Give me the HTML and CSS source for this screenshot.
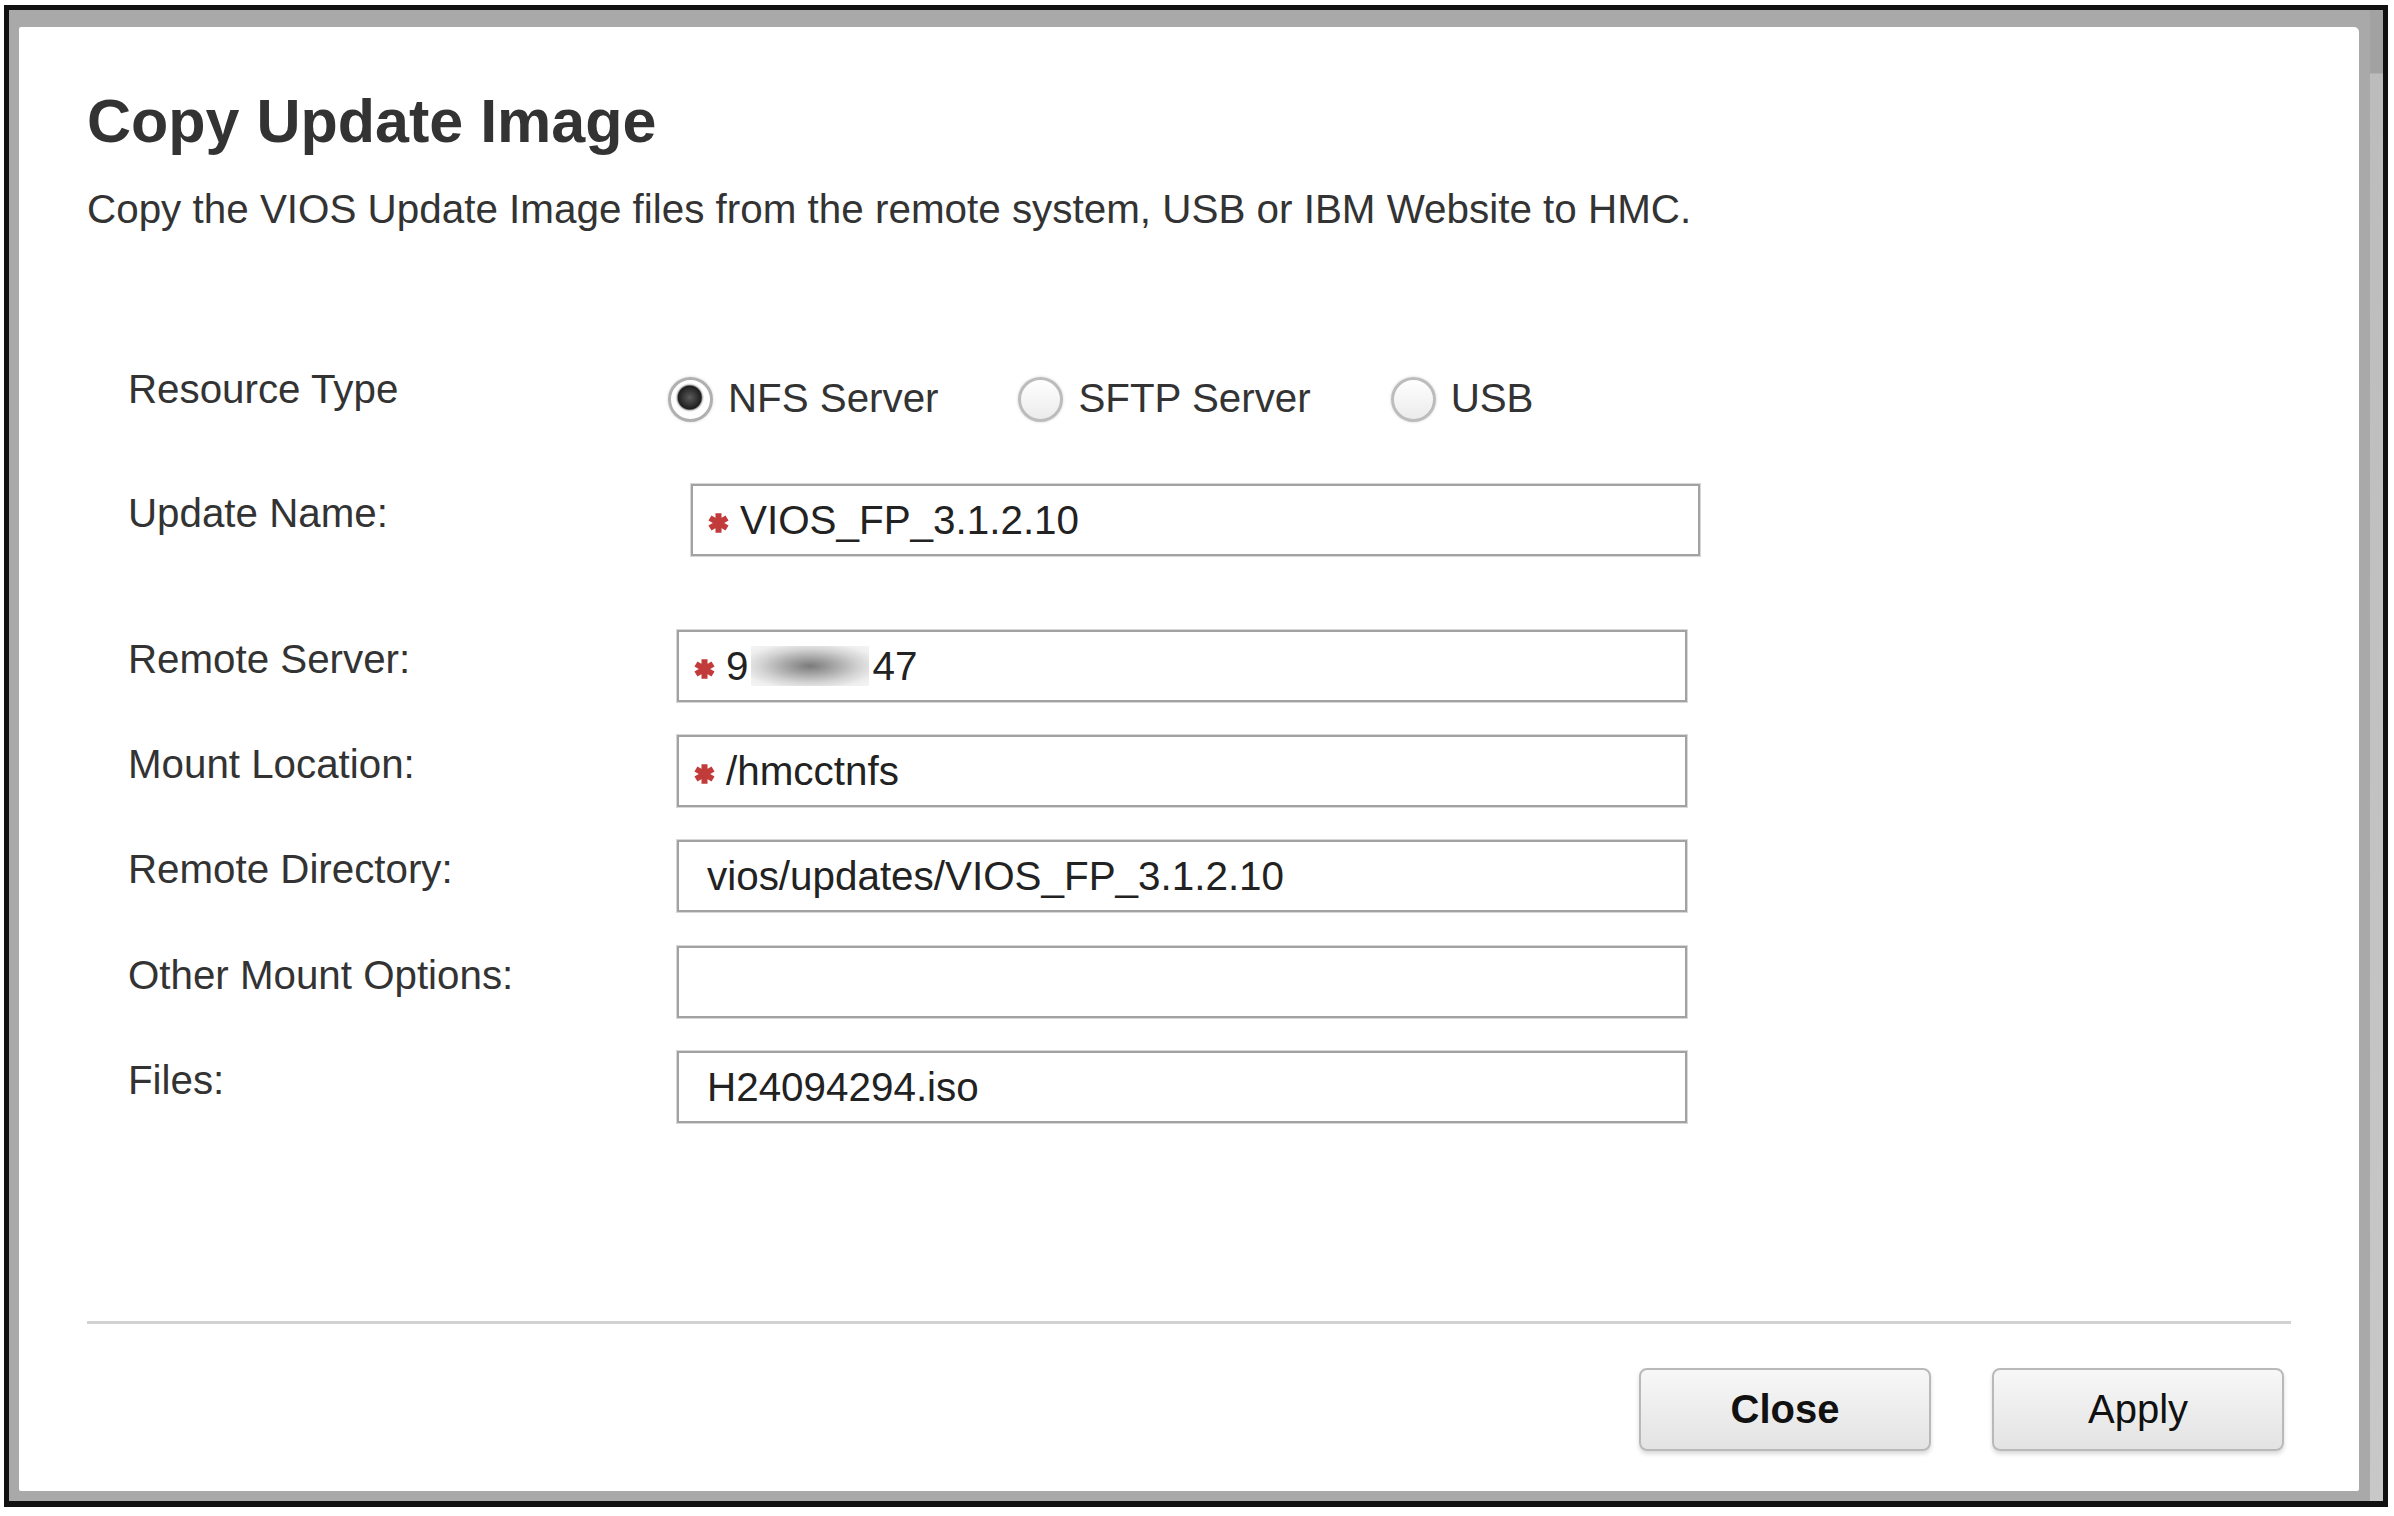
FILE: index.html
```html
<!DOCTYPE html>
<html lang="en">
<head>
    <meta charset="utf-8">
    <title>Copy Update Image</title>
    <link rel="stylesheet" href="styles.css">
</head>
<body>
<div class="frame">
	<div class="dialog">
		<h1 class="dlg-title">Copy Update Image</h1>
		<p class="dlg-desc">Copy the VIOS Update Image files from the remote system, USB or IBM Website to HMC.</p>
		<form class="dlg-form" action="" method="post">
			<div class="row row-type">
				<div class="lbl">Resource Type</div>
				<div class="radios">
					<label class="radio"><span class="dot on"></span>NFS Server</label>
					<label class="radio"><span class="dot"></span>SFTP Server</label>
					<label class="radio"><span class="dot"></span>USB</label>
				</div>
			</div>
			<div class="row row-name">
				<div class="lbl">Update Name:</div>
				<div class="field field-req field-name">
					<svg class="req" viewBox="0 0 16 16"><path d="M8 0.5V15.5M1.5 4.2L14.5 11.8M1.5 11.8L14.5 4.2"/></svg>
					<span>VIOS_FP_3.1.2.10</span>
				</div>
			</div>
			<div class="row row-server">
				<div class="lbl">Remote Server:</div>
				<div class="field field-req">
					<svg class="req" viewBox="0 0 16 16"><path d="M8 0.5V15.5M1.5 4.2L14.5 11.8M1.5 11.8L14.5 4.2"/></svg>
					<span>9</span><span class="blur"></span><span>47</span>
				</div>
			</div>
			<div class="row">
				<div class="lbl">Mount Location:</div>
				<div class="field field-req">
					<svg class="req" viewBox="0 0 16 16"><path d="M8 0.5V15.5M1.5 4.2L14.5 11.8M1.5 11.8L14.5 4.2"/></svg>
					<span>/hmcctnfs</span>
				</div>
			</div>
			<div class="row">
				<div class="lbl">Remote Directory:</div>
				<div class="field"><span>vios/updates/VIOS_FP_3.1.2.10</span></div>
			</div>
			<div class="row row-opts">
				<div class="lbl">Other Mount Options:</div>
				<div class="field"></div>
			</div>
			<div class="row">
				<div class="lbl">Files:</div>
				<div class="field"><span>H24094294.iso</span></div>
			</div>
		</form>
		<div class="sep"></div>
		<div class="foot">
			<button type="button" class="btn btn-close">Close</button>
			<button type="button" class="btn">Apply</button>
		</div>
	</div>
	<div class="sbar"></div>
</div>
</body>
</html>
```

FILE: styles.css
```css
html,body{margin:0;padding:0;background:#fff;}
body{font-family:"Liberation Sans",Arial,Helvetica,sans-serif;color:#333;}
.frame{margin:5px 0 0 4px;width:2384px;height:1502px;box-sizing:border-box;border:5px solid #111;border-bottom-width:6px;background:#a9a9a9;padding:17px 0 10px 10px;display:flex;}
.dialog{flex:1;background:#fff;border-radius:2px 5px 2px 2px;padding:0 68px;display:flex;flex-direction:column;}
.sbar{width:24px;margin:-17px 0 -10px 0;background:linear-gradient(to right,#a9a9a9 0,#a9a9a9 11px,transparent 11px),linear-gradient(to bottom,#a2a2a2 0,#a2a2a2 63px,#bcbcbc 64px,#c8c8c8 100%);}

.dlg-title{margin:0;padding-top:59px;font-size:61px;line-height:70px;font-weight:bold;color:#333;}
.dlg-desc{margin:30px 0 0;font-size:40.4px;line-height:46px;color:#333;}

.dlg-form{margin:135px 0 0;padding-left:41px;}
.row{display:flex;align-items:flex-start;margin-top:33px;}
.row .lbl{width:549px;flex:none;font-size:40.3px;line-height:46px;padding-top:7px;color:#333;}
.row-type{margin-top:0;}
.row-type .lbl{padding-top:0;}
.row-name{margin-top:62px;}
.row-server{margin-top:74px;}
.row-opts{margin-top:34px;}

.radios{display:flex;align-items:center;padding-top:9px;margin-left:-9px;}
.radio{display:flex;align-items:center;font-size:40.3px;line-height:46px;color:#333;margin-right:80px;cursor:pointer;}
.radio .dot{width:45px;height:45px;box-sizing:border-box;border-radius:50%;border:3px solid #bcbcbc;background:linear-gradient(#fff,#ebebeb);box-shadow:0 0 3px rgba(0,0,0,.18);margin-right:15px;}
.radio .dot.on{border-color:#b0b0b0;background:radial-gradient(circle at 48% 45%,#5c5c5c 0,#1e1e1e 11.5px,#cfcfcf 13px,#fff 14.5px,#fff 100%);}

.field{width:1010px;height:72px;box-sizing:border-box;border:2px solid #a2a2a2;box-shadow:0 0 0 1px #d8d8d8;background:#fff;display:flex;align-items:center;padding-left:28px;font-size:40.4px;color:#222;white-space:nowrap;}
.field-req{padding-left:15px;}
.field-name{margin-left:14px;width:1009px;}
.req{width:21px;height:22px;flex:none;margin:5px 11px 0 0;}
.req path{stroke:#c23b3b;stroke-width:4.6;fill:none;}
.blur{display:inline-block;width:118px;height:40px;margin:0 3px;background:radial-gradient(ellipse at center,#7a7a7a 0,#a4a4a4 28%,#d2d2d2 58%,#eeeeee 82%,#f5f5f5 100%);}

.sep{margin-top:198px;height:3px;background:#d2d2d2;}
.foot{display:flex;justify-content:flex-end;gap:61px;margin-top:44px;padding-right:7px;}
.btn{width:292px;height:83px;box-sizing:border-box;border:2px solid #b9b9b9;border-radius:8px;background:linear-gradient(#f7f7f7,#e3e3e3);box-shadow:0 3px 4px rgba(0,0,0,.15);font-family:"Liberation Sans",Arial,Helvetica,sans-serif;font-size:40px;color:#111;cursor:pointer;padding:0;}
.btn-close{font-weight:bold;}
```
